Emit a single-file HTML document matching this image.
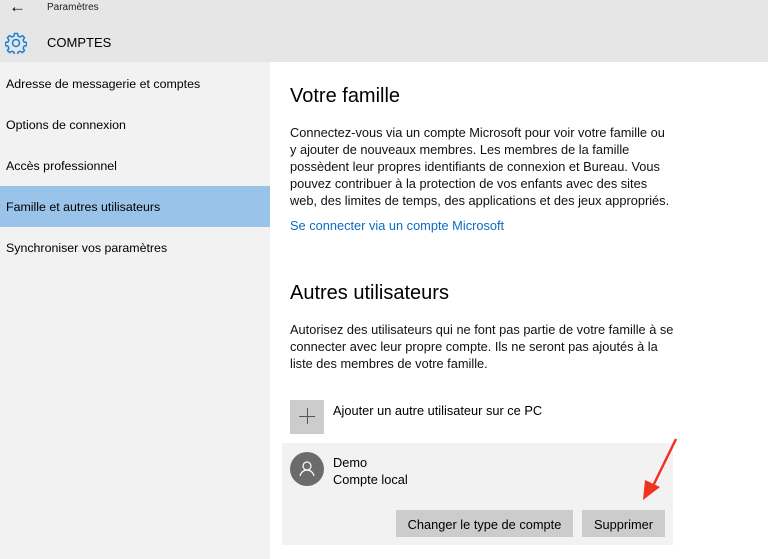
<!DOCTYPE html>
<html><head><style>
body{margin:0;width:768px;height:559px;overflow:hidden;background:#fff;font-family:"Liberation Sans",sans-serif;color:#000;position:relative}
.a{position:absolute;white-space:nowrap}
</style></head><body>
<div class="a" style="left:0;top:0;width:768px;height:62px;background:#e6e6e6"></div>
<div class="a" style="left:9px;top:-3px;font-size:17px">&#8592;</div>
<div class="a" style="left:47px;top:2px;font-size:10px;color:#222">Paramètres</div>
<svg class="a" style="left:5px;top:32px" width="22" height="22" viewBox="0 0 22 22"><g fill="none" stroke="#1a7fd6" stroke-width="1.5"><circle cx="11" cy="11" r="3.5"/><path d="M9.5 1.5h3l.6 2.6 2 .9 2.3-1.4 2.1 2.1-1.4 2.3.9 2 2.6.6v3l-2.6.6-.9 2 1.4 2.3-2.1 2.1-2.3-1.4-2 .9-.6 2.6h-3l-.6-2.6-2-.9-2.3 1.4-2.1-2.1 1.4-2.3-.9-2-2.6-.6v-3l2.6-.6.9-2-1.4-2.3 2.1-2.1 2.3 1.4 2-.9z"/></g></svg>
<div class="a" style="left:47px;top:35px;font-size:13px">COMPTES</div>
<div class="a" style="left:0;top:62px;width:270px;height:497px;background:#f2f2f2"></div>
<div class="a" style="left:0;top:186px;width:270px;height:41px;background:#99c3e9"></div>
<div class="a" style="left:6px;top:77px;font-size:12.4px">Adresse de messagerie et comptes</div>
<div class="a" style="left:6px;top:118px;font-size:12.4px">Options de connexion</div>
<div class="a" style="left:6px;top:159px;font-size:12.4px">Accès professionnel</div>
<div class="a" style="left:6px;top:200px;font-size:12.4px">Famille et autres utilisateurs</div>
<div class="a" style="left:6px;top:241px;font-size:12.4px">Synchroniser vos paramètres</div>
<div class="a" style="left:290px;top:85px;font-size:20px">Votre famille</div>
<div class="a" style="left:290px;top:124px;font-size:12.8px;line-height:17px;color:#111">Connectez-vous via un compte Microsoft pour voir votre famille ou<br>y ajouter de nouveaux membres. Les membres de la famille<br>possèdent leur propres identifiants de connexion et Bureau. Vous<br>pouvez contribuer à la protection de vos enfants avec des sites<br>web, des limites de temps, des applications et des jeux appropriés.</div>
<div class="a" style="left:290px;top:218px;font-size:12.8px;color:#0a6cc2">Se connecter via un compte Microsoft</div>
<div class="a" style="left:290px;top:282px;font-size:20px">Autres utilisateurs</div>
<div class="a" style="left:290px;top:321px;font-size:12.8px;line-height:17px;color:#111">Autorisez des utilisateurs qui ne font pas partie de votre famille à se<br>connecter avec leur propre compte. Ils ne seront pas ajoutés à la<br>liste des membres de votre famille.</div>
<div class="a" style="left:290px;top:400px;width:34px;height:34px;background:#cccccc"></div>
<div class="a" style="left:299px;top:416px;width:16px;height:1px;background:#555"></div>
<div class="a" style="left:307px;top:408px;width:1px;height:16px;background:#555"></div>
<div class="a" style="left:333px;top:403px;font-size:12.8px">Ajouter un autre utilisateur sur ce PC</div>
<div class="a" style="left:282px;top:443px;width:391px;height:102px;background:#f2f2f2"></div>
<svg class="a" style="left:290px;top:452px" width="34" height="34"><circle cx="17" cy="17" r="17" fill="#6b6b6b"/><g fill="none" stroke="#fff" stroke-width="1.2"><circle cx="17" cy="14" r="4"/><path d="M10 24c1-4 4-6 7-6s6 2 7 6"/></g></svg>
<div class="a" style="left:333px;top:455px;font-size:12.8px">Demo</div>
<div class="a" style="left:333px;top:472px;font-size:12.8px">Compte local</div>
<div class="a" style="left:396px;top:510px;width:177px;height:27px;background:#cccccc;font-size:12.8px;text-align:center;line-height:29px">Changer le type de compte</div>
<div class="a" style="left:582px;top:510px;width:83px;height:27px;background:#cccccc;font-size:12.8px;text-align:center;line-height:29px">Supprimer</div>
<svg class="a" style="left:630px;top:430px" width="60" height="80"><path d="M46 9L22 58" stroke="#f0321e" stroke-width="2.5"/><path d="M13 70L15 50L30 57Z" fill="#f0321e"/></svg>
</body></html>
